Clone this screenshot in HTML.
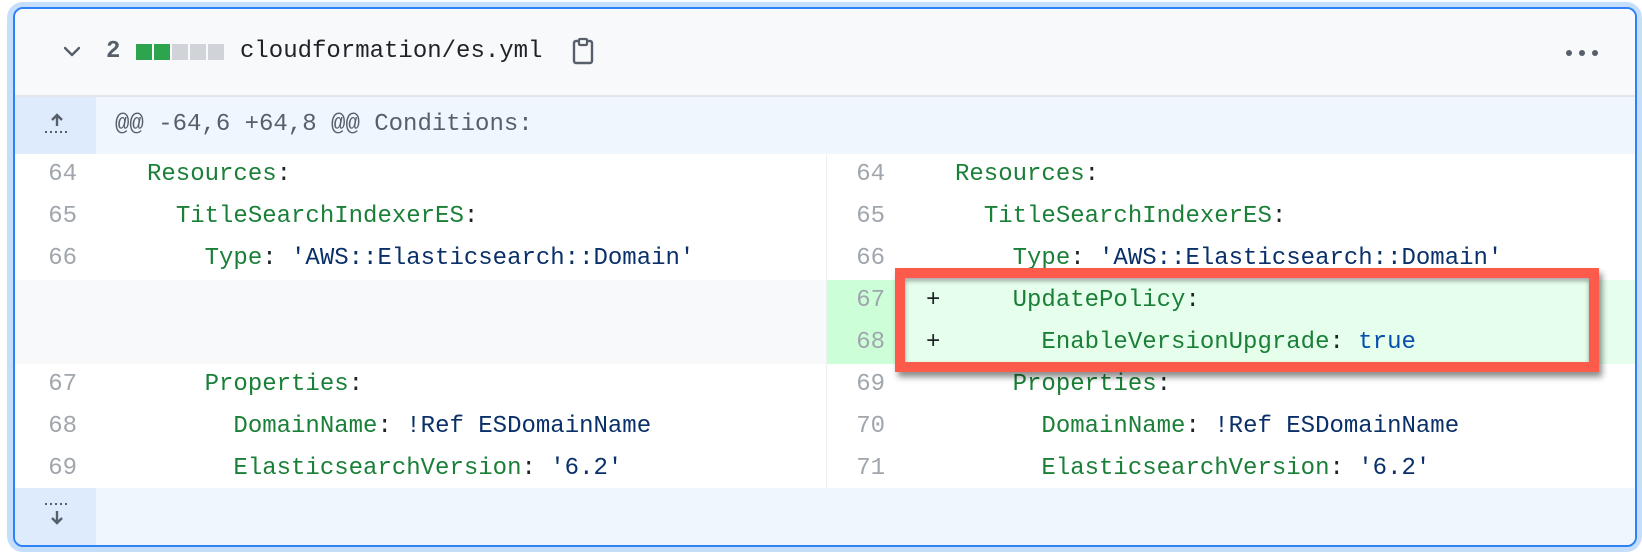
<!DOCTYPE html>
<html><head><style>
*{margin:0;padding:0;box-sizing:border-box}
body{width:1642px;height:554px;background:#fff;position:relative;overflow:hidden;font-family:"Liberation Mono",monospace}
.ring{position:absolute;left:7px;top:2px;width:1635px;height:550px;border:6px solid #c5defb;border-radius:16px}
.box{position:absolute;left:13px;top:7px;width:1624px;height:540px;border:2px solid #2f81f7;border-radius:10px;overflow:hidden;background:#fff}
.hdr{position:absolute;left:0;top:0;right:0;height:88px;background:#f8f9fb;border-bottom:2px solid #e3e5e8}
.hunk{position:absolute;left:0;top:88px;right:0;height:57px;background:#eff6fe}
.hg{position:absolute;left:0;top:0;width:81px;height:100%;background:#ddebfd}
.t{position:absolute;font-size:24px;line-height:42px;white-space:pre}
.ln{color:#a0a6ad;text-align:right;width:40px}
.k{color:#1a7f37}.s{color:#0a3069}.b{color:#0550ae}.p{color:#1f2328}
.exp{position:absolute;left:0;top:479px;right:0;height:60px;background:#eff6fe}
</style></head><body>
<div class="ring"></div>
<div class="box">
 <div class="hdr">
  <svg style="position:absolute;left:47px;top:36px" width="20" height="14"><path d="M3 3 L10 10 L17 3" fill="none" stroke="#57606a" stroke-width="2.4" stroke-linecap="round" stroke-linejoin="round"/></svg>
  <div class="t" style="left:91px;top:22px;font-weight:bold;color:#57606a;font-size:24px">2</div>
  <div style="position:absolute;left:121px;top:35px;width:16px;height:16px;background:#2da44e"></div>
  <div style="position:absolute;left:139px;top:35px;width:16px;height:16px;background:#2da44e"></div>
  <div style="position:absolute;left:157px;top:35px;width:16px;height:16px;background:#d0d4d9"></div>
  <div style="position:absolute;left:175px;top:35px;width:16px;height:16px;background:#d0d4d9"></div>
  <div style="position:absolute;left:193px;top:35px;width:16px;height:16px;background:#d0d4d9"></div>
  <div class="t" style="left:225px;top:22px;color:#1f2328;font-size:24px">cloudformation/es.yml</div>
  <svg style="position:absolute;left:557px;top:28px" width="22" height="28"><rect x="2" y="4" width="18" height="22" rx="2" fill="none" stroke="#57606a" stroke-width="2.4"/><rect x="7" y="2" width="8" height="6" rx="1" fill="#f8f9fb" stroke="#57606a" stroke-width="2.2"/></svg>
  <div style="position:absolute;left:1551px;top:41px;width:6px;height:6px;border-radius:50%;background:#57606a"></div>
  <div style="position:absolute;left:1564px;top:41px;width:6px;height:6px;border-radius:50%;background:#57606a"></div>
  <div style="position:absolute;left:1577px;top:41px;width:6px;height:6px;border-radius:50%;background:#57606a"></div>
 </div>
 <div class="hunk"><div class="hg"></div>
  <svg style="position:absolute;left:28px;top:14px" width="28" height="26"><path d="M14 15 V4 M9 9 L14 4 L19 9" fill="none" stroke="#57606a" stroke-width="2.4"/><path d="M2 21 H26" stroke="#57606a" stroke-width="2" stroke-dasharray="2 3"/></svg>
  <div class="t" style="left:100px;top:7px;color:#57606a">@@ -64,6 +64,8 @@ Conditions:</div>
 </div>
 <div style="position:absolute;left:0;top:271px;width:811px;height:84px;background:#f8f9fb"></div>
 <div style="position:absolute;left:811px;top:145px;width:1px;height:334px;background:#eef0f2"></div>
 <div style="position:absolute;left:812px;top:271px;width:72px;height:84px;background:#ccffd8"></div>
 <div style="position:absolute;left:884px;top:271px;right:0;height:84px;background:#e6ffec"></div>

 <div class="t ln" style="left:22px;top:145px">64</div>
 <div class="t ln" style="left:22px;top:187px">65</div>
 <div class="t ln" style="left:22px;top:229px">66</div>
 <div class="t ln" style="left:22px;top:355px">67</div>
 <div class="t ln" style="left:22px;top:397px">68</div>
 <div class="t ln" style="left:22px;top:439px">69</div>
 <div class="t" style="left:132px;top:145px"><span class="k">Resources</span><span class="p">:</span></div>
 <div class="t" style="left:132px;top:187px">  <span class="k">TitleSearchIndexerES</span><span class="p">:</span></div>
 <div class="t" style="left:132px;top:229px">    <span class="k">Type</span><span class="p">:</span> <span class="s">'AWS::Elasticsearch::Domain'</span></div>
 <div class="t" style="left:132px;top:355px">    <span class="k">Properties</span><span class="p">:</span></div>
 <div class="t" style="left:132px;top:397px">      <span class="k">DomainName</span><span class="p">:</span> <span class="s">!Ref ESDomainName</span></div>
 <div class="t" style="left:132px;top:439px">      <span class="k">ElasticsearchVersion</span><span class="p">:</span> <span class="s">'6.2'</span></div>

 <div class="t ln" style="left:830px;top:145px">64</div>
 <div class="t ln" style="left:830px;top:187px">65</div>
 <div class="t ln" style="left:830px;top:229px">66</div>
 <div class="t ln" style="left:830px;top:271px">67</div>
 <div class="t ln" style="left:830px;top:313px">68</div>
 <div class="t ln" style="left:830px;top:355px">69</div>
 <div class="t ln" style="left:830px;top:397px">70</div>
 <div class="t ln" style="left:830px;top:439px">71</div>
 <div class="t" style="left:940px;top:145px"><span class="k">Resources</span><span class="p">:</span></div>
 <div class="t" style="left:940px;top:187px">  <span class="k">TitleSearchIndexerES</span><span class="p">:</span></div>
 <div class="t" style="left:940px;top:229px">    <span class="k">Type</span><span class="p">:</span> <span class="s">'AWS::Elasticsearch::Domain'</span></div>
 <div class="t p" style="left:911px;top:271px">+</div>
 <div class="t p" style="left:911px;top:313px">+</div>
 <div class="t" style="left:940px;top:271px">    <span class="k">UpdatePolicy</span><span class="p">:</span></div>
 <div class="t" style="left:940px;top:313px">      <span class="k">EnableVersionUpgrade</span><span class="p">:</span> <span class="b">true</span></div>
 <div class="t" style="left:940px;top:355px">    <span class="k">Properties</span><span class="p">:</span></div>
 <div class="t" style="left:940px;top:397px">      <span class="k">DomainName</span><span class="p">:</span> <span class="s">!Ref ESDomainName</span></div>
 <div class="t" style="left:940px;top:439px">      <span class="k">ElasticsearchVersion</span><span class="p">:</span> <span class="s">'6.2'</span></div>

 <div style="position:absolute;left:880px;top:259px;width:704px;height:104px;border:10px solid #fc5a4a;box-shadow:3px 5px 6px rgba(0,0,0,.45), inset 0 3px 5px rgba(0,0,0,.35)"></div>

 <div class="exp"><div class="hg"></div>
  <svg style="position:absolute;left:28px;top:12px" width="28" height="30"><path d="M2 4 H26" stroke="#57606a" stroke-width="2" stroke-dasharray="2 3"/><path d="M14 11 V23 M9 18 L14 23 L19 18" fill="none" stroke="#57606a" stroke-width="2.4"/></svg>
 </div>
</div>
</body></html>
